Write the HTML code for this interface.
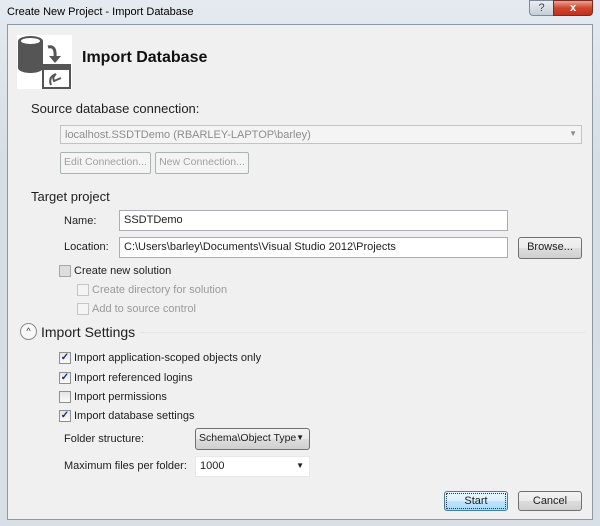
<!DOCTYPE html>
<html><head><style>
*{box-sizing:border-box;margin:0;padding:0}
body{width:600px;height:526px;overflow:hidden;background:#c9d3dd;font-family:"Liberation Sans",sans-serif;font-size:11px;color:#1e1e1e;position:relative}
.frame{position:absolute;left:0;top:0;width:600px;height:526px;background:linear-gradient(#e4eaf0,#d6dee6 30%,#d8dfe7)}
.client{position:absolute;left:7px;top:24px;width:586px;height:496px;background:#f0f0f0;border:1px solid #8c99a6}
.a{position:absolute;white-space:nowrap}
.box{position:absolute;background:#fff;border:1px solid #abadb3;font-size:11px;padding:2px 4px;line-height:14px}
.btn{position:absolute;border:1px solid #707070;border-radius:3px;background:linear-gradient(#f2f2f2,#ebebeb 50%,#dddddd 51%,#cfcfcf);text-align:center;font-size:11px;line-height:18px;white-space:nowrap;overflow:hidden}
.dis{border-color:#adb2b5;background:#f4f4f4;color:#a0a0a0;border-radius:2px;font-size:10.5px}
.cb{position:absolute;width:12px;height:12px;border:1px solid #8f8f8f;background:linear-gradient(#e6e6e6,#fafafa);font-size:10px;line-height:10px;text-align:center;color:#1b2a6b;font-weight:bold}
.cbd{border-color:#c5c5c5;background:#f4f4f4}
</style></head><body>
<div class="frame"></div>
<div class="a" style="left:7px;top:6px;font-size:11px;color:#000">Create New Project - Import Database</div>
<div style="position:absolute;left:529px;top:0;width:25px;height:16px;border:1px solid #7d8a96;border-radius:0 0 0 4px;background:linear-gradient(#e8edf2,#c4ced8);text-align:center;font-size:11px;line-height:14px;color:#444">?</div>
<div style="position:absolute;left:553px;top:0;width:40px;height:16px;border:1px solid #7a2a22;border-radius:0 0 4px 0;background:linear-gradient(#e8a493,#d0452e 50%,#c03020);text-align:center;color:#fff;font-weight:bold;font-size:11px;line-height:14px">x</div>
<div class="client"></div>
<div style="position:absolute;left:17px;top:35px;width:55px;height:54px;background:#fff"></div>
<svg style="position:absolute;left:17px;top:35px" width="55" height="54" viewBox="0 0 55 54">
<rect x="1" y="6" width="25" height="27" fill="#555"/><ellipse cx="13.5" cy="6" rx="12.5" ry="5" fill="#555"/><ellipse cx="13.5" cy="6" rx="9.5" ry="3" fill="#fff"/><ellipse cx="13.5" cy="33" rx="12.5" ry="5" fill="#555"/>
<path d="M31 12 q8 -2 7 10" fill="none" stroke="#555" stroke-width="3"/><path d="M32 21 l6 7 l6 -7z" fill="#555"/>
<path d="M26 30 h27 v23 h-27 z" fill="#fff" stroke="#555" stroke-width="2"/><rect x="26" y="29" width="27" height="6" fill="#555"/>
<path d="M34 50 q-3 -8 5 -11 q-4 3 -2 7 l7 -3" fill="none" stroke="#555" stroke-width="2"/>
</svg>
<div class="a" style="left:82px;top:49px;font-size:16px;font-weight:bold;color:#111">Import Database</div>
<div class="a" style="left:31px;top:101px;font-size:13px">Source database connection:</div>
<div class="box" style="left:60px;top:125px;width:522px;height:19px;background:#f4f4f4;border-color:#c3c3c3;color:#8d8d8d">localhost.SSDTDemo (RBARLEY-LAPTOP\barley)<span style="position:absolute;right:4px;top:1px;font-size:8px">▼</span></div>
<div class="btn dis" style="left:60px;top:152px;width:91px;height:22px">Edit Connection...</div>
<div class="btn dis" style="left:155px;top:152px;width:94px;height:22px">New Connection...</div>
<div class="a" style="left:31px;top:189px;font-size:13px">Target project</div>
<div class="a" style="left:64px;top:215px">Name:</div>
<div class="box" style="left:119px;top:210px;width:389px;height:21px">SSDTDemo</div>
<div class="a" style="left:64px;top:241px">Location:</div>
<div class="box" style="left:119px;top:237px;width:389px;height:21px">C:\Users\barley\Documents\Visual Studio 2012\Projects</div>
<div class="btn" style="left:518px;top:237px;width:64px;height:22px">Browse...</div>
<div class="cb cbd" style="left:59px;top:265px;border-color:#a8a8a8;background:#ddd"></div>
<div class="a" style="left:74px;top:265px">Create new solution</div>
<div class="cb cbd" style="left:77px;top:284px"></div>
<div class="a" style="left:92px;top:284px;color:#9a9a9a">Create directory for solution</div>
<div class="cb cbd" style="left:77px;top:303px"></div>
<div class="a" style="left:92px;top:303px;color:#9a9a9a">Add to source control</div>
<div style="position:absolute;left:20px;top:323px;width:17px;height:17px;border:1px solid #8a8a8a;border-radius:50%;background:#f8f8f8;text-align:center;font-size:9px;line-height:15px;color:#333">^</div>
<div class="a" style="left:41px;top:324px;font-size:14px">Import Settings</div>
<div style="position:absolute;left:140px;top:332px;width:445px;height:1px;background:#e4e4e4"></div>
<div class="cb" style="left:59px;top:352px">✓</div><div class="a" style="left:74px;top:352px">Import application-scoped objects only</div>
<div class="cb" style="left:59px;top:372px">✓</div><div class="a" style="left:74px;top:372px">Import referenced logins</div>
<div class="cb" style="left:59px;top:391px"></div><div class="a" style="left:74px;top:391px">Import permissions</div>
<div class="cb" style="left:59px;top:410px">✓</div><div class="a" style="left:74px;top:410px">Import database settings</div>
<div class="a" style="left:64px;top:433px">Folder structure:</div>
<div class="btn" style="left:195px;top:428px;width:115px;height:22px;text-align:left;padding-left:3px;font-size:10.5px">Schema\Object Type<span style="position:absolute;right:5px;top:0;font-size:8px">▼</span></div>
<div class="a" style="left:64px;top:460px">Maximum files per folder:</div>
<div class="box" style="left:195px;top:456px;width:115px;height:21px;border-color:#e8e8e8">1000<span style="position:absolute;right:5px;top:2px;font-size:8px">▼</span></div>
<div class="btn" style="left:444px;top:491px;width:64px;height:20px;border-color:#3c7fb1;background:linear-gradient(#eaf6fd,#d9f0fc 50%,#bee6fd 51%,#a7d9f5);outline:1px dotted #333;outline-offset:-3px">Start</div>
<div class="btn" style="left:518px;top:491px;width:64px;height:20px">Cancel</div>
</body></html>
